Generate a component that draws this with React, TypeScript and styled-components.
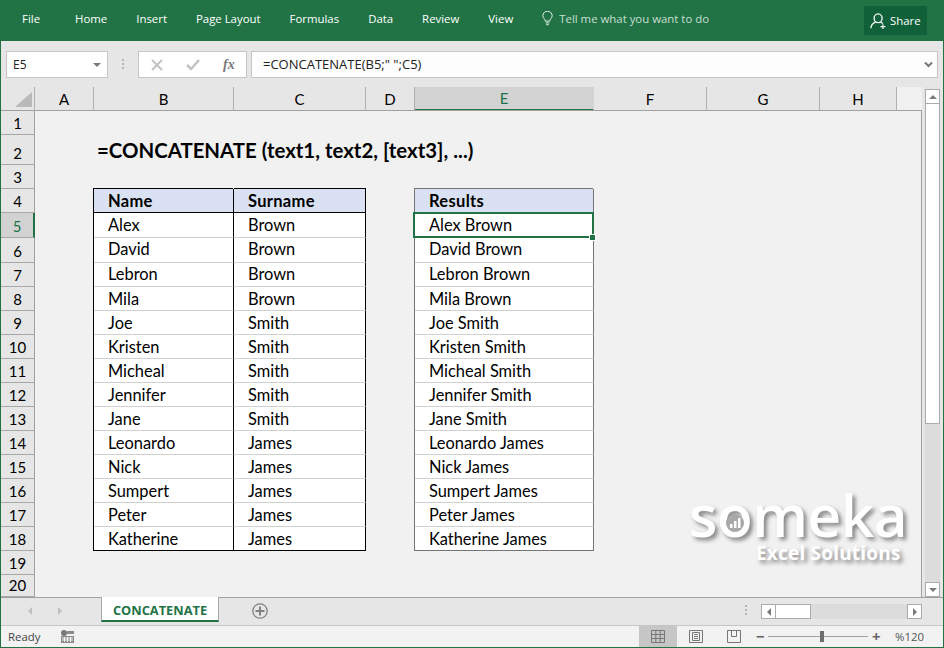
import React from "react";
import styled, { createGlobalStyle } from "styled-components";

const GREEN = "#217346";
const CELL_FONT = `Lato, "Liberation Sans", sans-serif`;
const UI_FONT = `"Open Sans", "Liberation Sans", sans-serif`;

const COLUMNS = ["A", "B", "C", "D", "E", "F", "G", "H"];
const ROW_COUNT = 20;
const PEOPLE = [
  ["Alex", "Brown"],
  ["David", "Brown"],
  ["Lebron", "Brown"],
  ["Mila", "Brown"],
  ["Joe", "Smith"],
  ["Kristen", "Smith"],
  ["Micheal", "Smith"],
  ["Jennifer", "Smith"],
  ["Jane", "Smith"],
  ["Leonardo", "James"],
  ["Nick", "James"],
  ["Sumpert", "James"],
  ["Peter", "James"],
  ["Katherine", "James"]
];
const TABS = ["Home", "Insert", "Page Layout", "Formulas", "Data", "Review", "View"];

// the first rows sit a little higher in their cells than the rest
const textLift = (i: number) => [3, 4, 3][i] ?? 2;

const GlobalStyle = createGlobalStyle`
  html, body {
    margin: 0;
    padding: 0;
    background: #fff;
  }
  * {
    box-sizing: border-box;
  }
`;

const Window = styled.div`
  width: 944px;
  height: 648px;
  display: flex;
  flex-direction: column;
  border: 1px solid ${GREEN};
  border-top: 0;
  overflow: hidden;
  font-family: ${UI_FONT};
`;

const Ribbon = styled.div`
  height: 41px;
  flex: none;
  display: flex;
  align-items: center;
  padding: 0 16px 4px 21px;
  background: ${GREEN};
  color: #fff;
  font-size: 11.4px;
`;

const FileTab = styled.span`
  margin-right: 35px;
`;

const RibbonTab = styled.span`
  margin-right: 29px;
`;

const TellMe = styled.div`
  display: flex;
  align-items: center;
  gap: 6px;
  color: #c9dfd2;
`;

const ShareButton = styled.div`
  margin-left: auto;
  margin-top: 4px;
  width: 63px;
  height: 29px;
  display: flex;
  align-items: center;
  gap: 3px;
  padding-left: 6px;
  background: #10613a;
`;

const FormulaBar = styled.div`
  height: 46px;
  flex: none;
  display: flex;
  align-items: flex-start;
  padding: 10px 5px 0 5px;
  background: #e6e6e6;
`;

const Field = styled.div`
  height: 27px;
  display: flex;
  align-items: center;
  background: #fff;
  border: 1px solid #c6c6c6;
  font-size: 12px;
  color: #222;
`;

const NameBox = styled(Field)`
  width: 102px;
  padding: 0 6px 0 6px;
  justify-content: space-between;
`;

const DownTriangle = styled.span`
  width: 0;
  height: 0;
  border-left: 4px solid transparent;
  border-right: 4px solid transparent;
  border-top: 4px solid #7a7a7a;
`;

const GripDots = styled.span<{ $margin: string }>`
  width: 2px;
  height: 10px;
  margin: ${(p) => p.$margin};
  flex: none;
  background: repeating-linear-gradient(#b4b4b4 0 2px, transparent 2px 4px);
`;

const FunctionBox = styled(Field)`
  width: 109px;
  margin-right: 4px;
  padding-left: 12px;
  gap: 23px;
`;

const FxLabel = styled.span`
  font-family: "Liberation Serif", serif;
  font-style: italic;
  font-weight: 700;
  font-size: 14px;
  color: #777;
`;

const FormulaInput = styled(Field)`
  flex: 1;
  padding: 0 4px 1px 11px;
  justify-content: space-between;
  background: #fdfdfd;
  font-size: 13px;
`;

const Workspace = styled.div`
  height: 510px;
  flex: none;
  display: flex;
  background: #e6e6e6;
`;

const SheetGrid = styled.div`
  position: relative;
  width: 921px;
  height: 510px;
  display: grid;
  grid-template-columns: 34px 59px 140px 132px 49px 179px 113px 113px 77px 25px;
  grid-template-rows: 24px 24px 30px 24px 24px 25px 25px repeat(13, 24px) 22px;
  background: #f1f1f1;
  border-bottom: 0;
  font-family: ${CELL_FONT};
  color: #000;
`;

const Placed = styled.div<{ $col: number; $row: number }>`
  grid-column: ${(p) => p.$col};
  grid-row: ${(p) => p.$row};
`;

const Corner = styled(Placed)`
  background: #e6e6e6;
  border-right: 1px solid #b0b0b0;
  border-bottom: 1px solid #a0a0a0;
  display: flex;
  align-items: flex-start;
  padding: 5px 0 0 14px;
`;

const CornerMark = styled.span`
  width: 17px;
  height: 15px;
  background: #b9b9b9;
  clip-path: polygon(100% 0, 100% 100%, 0 100%);
`;

const ColHeader = styled(Placed)<{ $active?: boolean }>`
  display: flex;
  align-items: center;
  justify-content: center;
  font-size: 15px;
  background: ${(p) => (p.$active ? "#d2d2d2" : "#e6e6e6")};
  color: ${(p) => (p.$active ? GREEN : "#000")};
  border-right: 1px solid ${(p) => (p.$active ? "#d2d2d2" : "#b0b0b0")};
  border-bottom: ${(p) => (p.$active ? `2px solid ${GREEN}` : "1px solid #a0a0a0")};
`;

const RowHeader = styled(Placed)<{ $active?: boolean }>`
  display: flex;
  align-items: flex-end;
  justify-content: center;
  padding-bottom: 2px;
  font-size: 15px;
  background: ${(p) => (p.$active ? "#d2d2d2" : "#e6e6e6")};
  color: ${(p) => (p.$active ? GREEN : "#000")};
  border-right: ${(p) => (p.$active ? `2px solid ${GREEN}` : "1px solid #a0a0a0")};
  border-bottom: 1px solid #a8a8a8;
`;

const EdgeRight = styled(Placed)`
  grid-row: 2 / span 20;
  border-right: 1px solid #a0a0a0;
`;

const Title = styled(Placed)`
  display: flex;
  align-items: center;
  padding-left: 3px;
  font-size: 20.4px;
  font-weight: 700;
  white-space: nowrap;
`;

const Cell = styled(Placed)<{
  $line: string;
  $lift?: number;
  $head?: boolean;
  $first?: boolean;
  $top?: boolean;
  $last?: boolean;
}>`
  display: flex;
  align-items: flex-end;
  padding: 0 0 ${(p) => p.$lift ?? 1}px 14px;
  white-space: nowrap;
  font-size: ${(p) => (p.$head ? 16.5 : 16.4)}px;
  letter-spacing: ${(p) => (p.$head ? 0.3 : 0)}px;
  font-weight: ${(p) => (p.$head ? 700 : 400)};
  background: ${(p) => (p.$head ? "#d9e1f2" : "#fff")};
  border-right: 1px solid ${(p) => p.$line};
  border-bottom: 1px solid ${(p) => (p.$head || p.$last ? p.$line : "#d0d0d0")};
  box-shadow: ${(p) => (p.$first ? `-1px 0 0 ${p.$line}` : "0 0 0 transparent")}
    ${(p) => (p.$top ? `, ${p.$first ? "-1px" : "0"} -1px 0 ${p.$line}` : "")};
`;

const SelectedCell = styled(Cell)`
  position: relative;
`;

const SelectionBox = styled.span`
  position: absolute;
  top: -1px;
  left: -2px;
  right: -1px;
  bottom: -1px;
  border: 2px solid ${GREEN};
`;

const FillHandle = styled.span`
  position: absolute;
  right: -2px;
  bottom: -3px;
  width: 5px;
  height: 5px;
  background: ${GREEN};
  box-shadow: 0 0 0 1px #fff;
`;

const TopEdge = styled.span`
  position: absolute;
  left: 34px;
  right: 0;
  top: 23px;
  height: 1px;
  background: #a0a0a0;
`;

const Watermark = styled.div`
  position: absolute;
  left: 688px;
  top: 400px;
  width: 225px;
  color: #fff;
  font-family: ${UI_FONT};
  text-shadow: 3px 3px 4px rgba(0, 0, 0, 0.45);
  pointer-events: none;
`;

const WatermarkName = styled.div`
  font-size: 58.5px;
  line-height: 55px;
  letter-spacing: -0.5px;
  font-weight: 600;
`;

const WatermarkSub = styled.div`
  margin-left: 67px;
  font-size: 19px;
  line-height: 22px;
  font-weight: 700;
  letter-spacing: 0.2px;
  white-space: nowrap;
`;

const WatermarkBadge = styled.svg`
  position: absolute;
  left: 37px;
  top: 27px;
`;

const VScroll = styled.div`
  flex: 1;
  display: flex;
  flex-direction: column;
  padding: 2px 3px 0 3px;
`;

const ScrollBtn = styled.div`
  flex: none;
  display: flex;
  align-items: center;
  justify-content: center;
  background: #fff;
  border: 1px solid #ababab;
`;

const VBtn = styled(ScrollBtn)`
  height: 15px;
`;

const VThumb = styled.div`
  height: 320px;
  flex: none;
  background: #fff;
  border: 1px solid #ababab;
  border-top: 0;
`;

const VTrack = styled.div`
  flex: 1;
  background: #dcdcdc;
`;

const TabBar = styled.div`
  height: 29px;
  flex: none;
  display: flex;
  align-items: flex-start;
  padding: 0 21px 0 26px;
  background: #e6e6e6;
  border-top: 1px solid #a0a0a0;
  border-bottom: 1px solid #c6c6c6;
`;

const NavArrows = styled.div`
  height: 23px;
  width: 74px;
  display: flex;
  align-items: center;
  gap: 24px;
  padding-top: 2px;
`;

const SheetTab = styled.div`
  margin-top: -1px;
  width: 118px;
  height: 25px;
  display: flex;
  align-items: center;
  justify-content: center;
  padding-top: 3px;
  background: #fff;
  border-left: 1px solid #a8a8a8;
  border-right: 1px solid #a8a8a8;
  border-bottom: 2px solid ${GREEN};
  color: ${GREEN};
  font-size: 12.8px;
  font-weight: 700;
`;

const AddSheet = styled.div`
  margin: 4px 0 0 33px;
  width: 16px;
  height: 16px;
`;

const HScroll = styled.div`
  margin: 6px 0 0 14px;
  width: 161px;
  height: 15px;
  display: flex;
  background: #dcdcdc;
`;

const HBtn = styled(ScrollBtn)`
  width: 15px;
`;

const HThumb = styled.div`
  width: 35px;
  background: #fff;
  border: 1px solid #ababab;
  border-left: 0;
`;

const Spacer = styled.div`
  flex: 1;
`;

const StatusBar = styled.div`
  flex: 1;
  display: flex;
  align-items: center;
  padding: 0 19px 0 7px;
  background: #f2f2f2;
  font-size: 11.4px;
  color: #444;
`;

const MacroIcon = styled.svg`
  margin-left: 21px;
`;

const ViewButton = styled.div<{ $active?: boolean }>`
  width: 38px;
  height: 100%;
  display: flex;
  align-items: center;
  justify-content: center;
  background: ${(p) => (p.$active ? "#c6c6c6" : "transparent")};
`;

const ZoomGlyph = styled.span<{ $left?: number }>`
  width: 8px;
  margin-left: ${(p) => p.$left ?? 0}px;
  text-align: center;
  font-size: 15px;
  font-weight: 700;
  line-height: 1;
  color: #666;
`;

const ZoomTrack = styled.div`
  position: relative;
  width: 100px;
  height: 1px;
  margin: 0 4px;
  background: #a0a0a0;
`;

const ZoomThumb = styled.span`
  position: absolute;
  left: 52px;
  top: -5px;
  width: 4px;
  height: 11px;
  background: #6e6e6e;
`;

const ZoomValue = styled.span`
  margin-left: 15px;
  color: #555;
`;

const Arrow = ({ dir, color = "#7a7a7a" }: { dir: "up" | "down" | "left" | "right"; color?: string }) => {
  const points = {
    up: "0,5 8,5 4,1",
    down: "0,1 8,1 4,5",
    left: "5,0 5,8 1,4",
    right: "1,0 1,8 5,4"
  }[dir];
  const vertical = dir === "up" || dir === "down";
  return (
    <svg width={vertical ? 8 : 6} height={vertical ? 6 : 8}>
      <polygon points={points} fill={color} />
    </svg>
  );
};

const LightbulbIcon = () => (
  <svg width="11" height="15" viewBox="0 0 12 17" fill="none" stroke="#fff" strokeWidth="1">
    <path d="M3.5 11.5C3.5 9 .7 8.2.7 5.3a5.3 5 0 0 1 10.6 0c0 2.9-2.8 3.7-2.8 6.2z" />
    <path d="M4 13.5h4M4.5 15.5h3" />
  </svg>
);

const ShareIcon = () => (
  <svg width="17" height="16" viewBox="0 0 21 20" fill="none" stroke="#fff" strokeWidth="1.6">
    <ellipse cx="10" cy="6.5" rx="5" ry="5.5" />
    <path d="M1 19c.3-4 3-6.5 6-7.5M13 11.5c1.200.4 2 .9 3 1.800" />
    <path d="M16 14v6M13 17h6" strokeWidth="1.400" />
  </svg>
);

const CancelIcon = () => (
  <svg width="12" height="12" viewBox="0 0 12 12" stroke="#c2c2c2" strokeWidth="2">
    <path d="M1 1l10 10M11 1L1 11" />
  </svg>
);

const CheckIcon = () => (
  <svg width="14" height="12" viewBox="0 0 14 12" fill="none" stroke="#c2c2c2" strokeWidth="2.500">
    <path d="M1 6l4 4 8-9" />
  </svg>
);

const ChevronIcon = () => (
  <svg width="9" height="7" viewBox="0 0 9 7" fill="none" stroke="#777" strokeWidth="2">
    <path d="M1 1.500l3.500 3.500L8 1.500" />
  </svg>
);

const PlusCircleIcon = () => (
  <svg width="16" height="16" viewBox="0 0 16 16" fill="none" stroke="#808080">
    <circle cx="8" cy="8" r="7.200" strokeWidth="1.300" />
    <path d="M8 3.500v9M3.500 8h9" strokeWidth="2" />
  </svg>
);

const CalendarIcon = () => (
  <MacroIcon width="13" height="13" viewBox="0 0 13 13">
    <circle cx="3" cy="3" r="3" fill="#777" />
    <path d="M6 1h7v3H6zM0 6h13v7H0z" fill="#8a8a8a" />
    <path d="M1 8h11M1 10h11M3.500 7v5M6.500 7v5M9.500 7v5" stroke="#f2f2f2" strokeWidth="1" />
  </MacroIcon>
);

const GridViewIcon = () => (
  <svg width="14" height="13" viewBox="0 0 14 13" fill="none" stroke="#777">
    <path d="M.5.5h13v12H.5zM.5 4.500h13M.5 8.500h13M4.800.5v12M9.200.5v12" />
  </svg>
);

const PageViewIcon = () => (
  <svg width="14" height="13" viewBox="0 0 14 13" fill="none" stroke="#777">
    <path d="M.5.5h13v12H.5zM3.500 2.500h7v8h-7zM5 4.500h4M5 6.500h4M5 8.500h4" />
  </svg>
);

const BreakViewIcon = () => (
  <svg width="14" height="13" viewBox="0 0 14 13" fill="none" stroke="#777">
    <path d="M.5.5h13v12H.5zM4.500.5v6h5v-6" />
  </svg>
);

const PersonTable = () => (
  <>
    <Cell $col={3} $row={5} $line="#000" $head $first $top>Name</Cell>
    <Cell $col={4} $row={5} $line="#000" $head $top>Surname</Cell>
    {PEOPLE.map(([name, surname], i) => (
      <React.Fragment key={name}>
        <Cell $col={3} $row={i + 6} $lift={textLift(i)} $line="#000" $first $last={i === PEOPLE.length - 1}>{name}</Cell>
        <Cell $col={4} $row={i + 6} $lift={textLift(i)} $line="#000" $last={i === PEOPLE.length - 1}>{surname}</Cell>
      </React.Fragment>
    ))}
  </>
);

const ResultTable = () => (
  <>
    <Cell $col={6} $row={5} $line="#757575" $head $first $top>Results</Cell>
    {PEOPLE.map(([name, surname], i) =>
      i === 0 ? (
        <SelectedCell key={name} $col={6} $row={6} $lift={textLift(i)} $line="#757575" $first>
          {name} {surname}
          <SelectionBox />
          <FillHandle />
        </SelectedCell>
      ) : (
        <Cell key={name} $col={6} $row={i + 6} $lift={textLift(i)} $line="#757575" $first $last={i === PEOPLE.length - 1}>
          {name} {surname}
        </Cell>
      )
    )}
  </>
);

export default function App() {
  return (
    <>
      <GlobalStyle />
      <Window>
        <Ribbon>
          <FileTab>File</FileTab>
          {TABS.map((tab) => (
            <RibbonTab key={tab}>{tab}</RibbonTab>
          ))}
          <TellMe>
            <LightbulbIcon />
            Tell me what you want to do
          </TellMe>
          <ShareButton>
            <ShareIcon />
            Share
          </ShareButton>
        </Ribbon>

        <FormulaBar>
          <NameBox>
            E5
            <DownTriangle />
          </NameBox>
          <GripDots $margin="8px 14px 0 14px" />
          <FunctionBox>
            <CancelIcon />
            <CheckIcon />
            <FxLabel>fx</FxLabel>
          </FunctionBox>
          <FormulaInput>
            =CONCATENATE(B5;" ";C5)
            <ChevronIcon />
          </FormulaInput>
        </FormulaBar>

        <Workspace>
          <SheetGrid>
            <Corner $col={1} $row={1}>
              <CornerMark />
            </Corner>
            {COLUMNS.map((col, i) => (
              <ColHeader key={col} $col={i + 2} $row={1} $active={col === "E"}>
                {col}
              </ColHeader>
            ))}
            {Array.from({ length: ROW_COUNT }, (_, i) => (
              <RowHeader key={i} $col={1} $row={i + 2} $active={i === 4}>
                {i + 1}
              </RowHeader>
            ))}
            <EdgeRight $col={10} $row={2} />
            <TopEdge />
            <Title $col={3} $row={3}>=CONCATENATE (text1, text2, [text3], ...)</Title>
            <PersonTable />
            <ResultTable />
            <Watermark>
              <WatermarkName>someka</WatermarkName>
              <WatermarkSub>Excel Solutions</WatermarkSub>
              <WatermarkBadge width="18" height="18" viewBox="0 0 18 18">
                <circle cx="9" cy="9" r="9" fill="#a8a8a8" />
                <path d="M4 10h2.500v4H4zM8 7h2.500v7H8zM12 4h2.500v10H12z" fill="#fff" />
              </WatermarkBadge>
            </Watermark>
          </SheetGrid>
          <VScroll>
            <VBtn>
              <Arrow dir="up" />
            </VBtn>
            <VThumb />
            <VTrack />
            <VBtn>
              <Arrow dir="down" />
            </VBtn>
          </VScroll>
        </Workspace>

        <TabBar>
          <NavArrows>
            <Arrow dir="left" color="#c0c0c0" />
            <Arrow dir="right" color="#c0c0c0" />
          </NavArrows>
          <SheetTab>CONCATENATE</SheetTab>
          <AddSheet>
            <PlusCircleIcon />
          </AddSheet>
          <Spacer />
          <GripDots $margin="7px 0 0 0" />
          <HScroll>
            <HBtn>
              <Arrow dir="left" />
            </HBtn>
            <HThumb />
            <Spacer />
            <HBtn>
              <Arrow dir="right" />
            </HBtn>
          </HScroll>
        </TabBar>

        <StatusBar>
          Ready
          <CalendarIcon />
          <Spacer />
          <ViewButton $active>
            <GridViewIcon />
          </ViewButton>
          <ViewButton>
            <PageViewIcon />
          </ViewButton>
          <ViewButton>
            <BreakViewIcon />
          </ViewButton>
          <ZoomGlyph $left={3}>−</ZoomGlyph>
          <ZoomTrack>
            <ZoomThumb />
          </ZoomTrack>
          <ZoomGlyph>+</ZoomGlyph>
          <ZoomValue>%120</ZoomValue>
        </StatusBar>
      </Window>
    </>
  );
}
